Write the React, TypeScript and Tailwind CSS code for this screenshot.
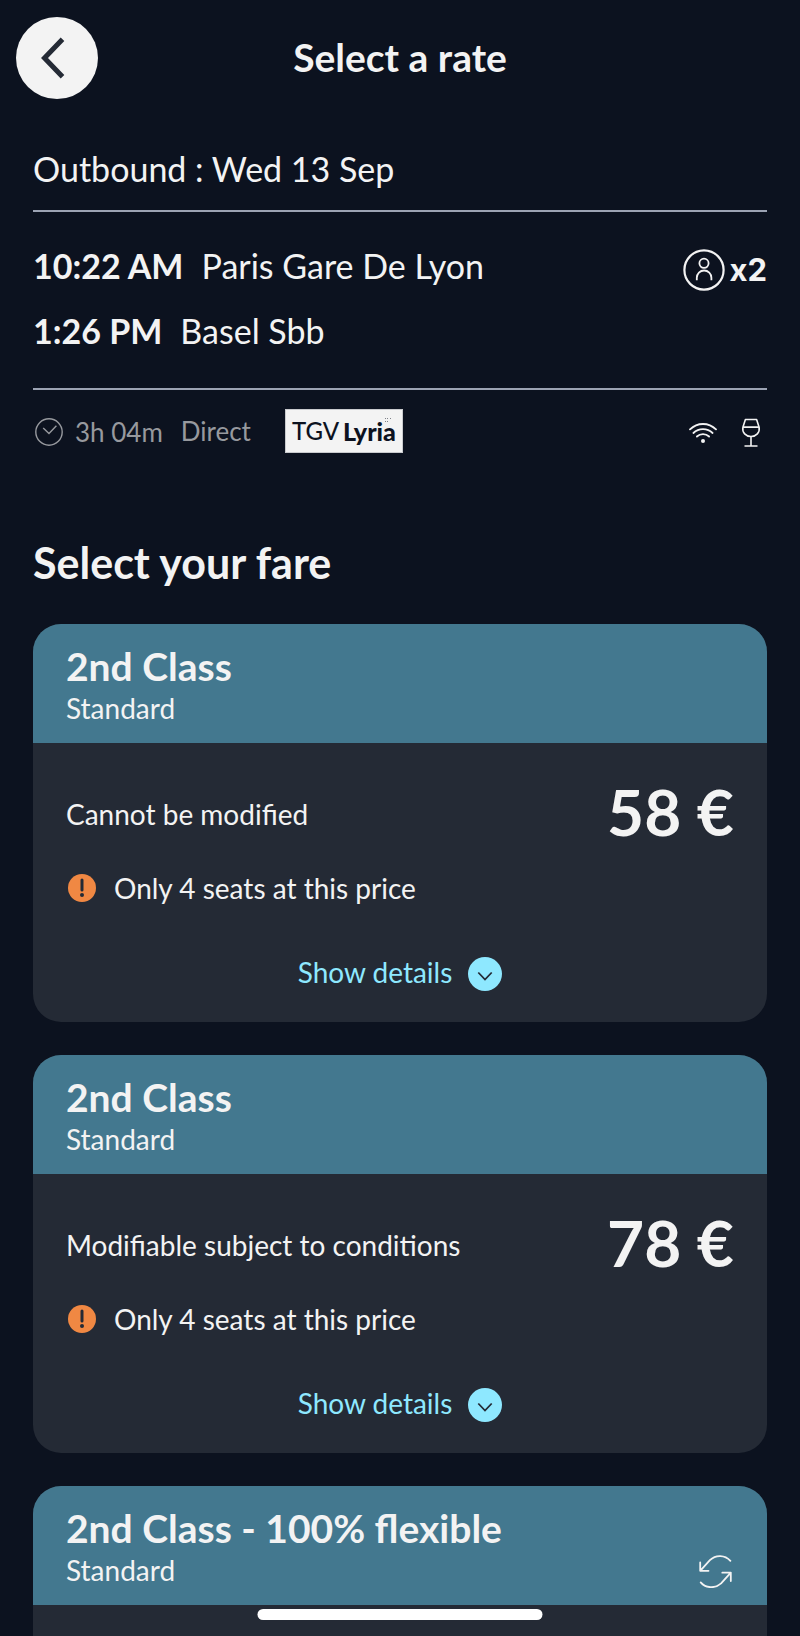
import { useState } from 'react';

type Fare = {
  id: number;
  title: string;
  category: string;
  exchangeable?: boolean;
  offer?: { condition: string; price: number; seatsLeft: number };
};

const fares: Fare[] = [
  { id: 1, title: '2nd Class', category: 'Standard', offer: { condition: 'Cannot be modified', price: 58, seatsLeft: 4 } },
  { id: 2, title: '2nd Class', category: 'Standard', offer: { condition: 'Modifiable subject to conditions', price: 78, seatsLeft: 4 } },
  { id: 3, title: '2nd Class - 100% flexible', category: 'Standard', exchangeable: true },
];

function PassengerIcon() {
  return (
    <svg width="42" height="42" viewBox="0 0 42 42" fill="none" stroke="currentColor" aria-hidden="true">
      <circle cx="21" cy="21" r="19.6" strokeWidth="2.2" />
      <circle cx="21" cy="14.3" r="4.6" strokeWidth="1.8" />
      <path d="M13.8 31.2v-2.4a7.3 7.3 0 0 1 14.6 0v2.4" strokeWidth="1.8" />
    </svg>
  );
}

function ClockIcon() {
  return (
    <svg width="28" height="28" viewBox="0 0 28 28" fill="none" stroke="currentColor" strokeWidth="1.4" aria-hidden="true">
      <circle cx="14" cy="14" r="13.2" />
      <path d="M8.2 10l5.8 5.6 7.4-7.8" />
    </svg>
  );
}

function WifiIcon() {
  return (
    <svg width="28" height="22" viewBox="0 0 28 22" fill="none" stroke="currentColor" strokeWidth="1.8" strokeLinecap="round" aria-hidden="true">
      <path d="M1 7.4c7.4-7.2 18.6-7.2 26 0" />
      <path d="M4.4 11c5.4-5.2 13.8-5.2 19.2 0" />
      <path d="M7.9 14.5c3.4-3.3 8.8-3.3 12.2 0" />
      <circle cx="14" cy="19" r="2" fill="currentColor" stroke="none" />
    </svg>
  );
}

function GlassIcon() {
  return (
    <svg width="20" height="30" viewBox="0 0 20 30" fill="none" stroke="currentColor" strokeWidth="1.6" strokeLinejoin="round" aria-hidden="true">
      <path d="M4.4 1.5h11.2l2.5 7.7c1 5.4-3 9.3-8.1 9.3s-9.1-3.9-8.1-9.3z" />
      <path d="M2 9.1h16M10 18.500v9.500M3.500 28h13" />
    </svg>
  );
}

function WarningIcon() {
  return (
    <svg width="28" height="28" viewBox="0 0 28 28" aria-hidden="true">
      <circle cx="14" cy="14" r="14" fill="#f08843" />
      <path d="M14 6v10" stroke="#242a35" strokeWidth="3" strokeLinecap="round" />
      <circle cx="14" cy="21" r="2" fill="#242a35" />
    </svg>
  );
}

function ExchangeIcon() {
  return (
    <svg className="mr-0.5 mb-0.5" width="33" height="33" viewBox="0 0 33 33" fill="none" stroke="currentColor" strokeWidth="1.8" strokeLinecap="round" strokeLinejoin="round" aria-hidden="true">
      <path d="M1.2 7.5v8.3h8.3M1.2 15.8l9.7-10.6c6-5.8 15-5.3 20.5.6" />
      <path d="M31.8 26v-8.3h-8.5M31.800 17.700l-9.700 10.700c-6 5.400-15.500 5-20.400-1" />
    </svg>
  );
}

function LyriaLogo() {
  return (
    <div className="relative flex h-11 items-center gap-1 border border-[#c9cacd] bg-[#f3f3f3] px-1.5 text-[#0c121f]">
      <span className="text-[24px] leading-8 font-medium">TGV</span>
      <span className="text-[25px] leading-8 font-black">Lyria</span>
      <svg className="absolute top-2 right-2.5" width="8" height="6" viewBox="0 0 8 6" fill="#0c121f" opacity="0.5" aria-hidden="true">
        <path d="M1 0h1v1H1zM3 0h1v1H3zM6 0h1v1H6zM1 3h1v1H1zM3 3h1v1H3z" />
      </svg>
    </div>
  );
}

function FareCard({ fare }: { fare: Fare }) {
  const [open, setOpen] = useState(false);
  const { offer } = fare;

  return (
    <article className="overflow-hidden rounded-[28px] bg-[#242a35]">
      {/* Class banner */}
      <header className="flex items-end justify-between bg-[#43788f] px-[33px] pt-5 pb-[15px]">
        <div>
          <h3 className="text-[39px] leading-11 font-bold">{fare.title}</h3>
          <p className="text-[28px] leading-10">{fare.category}</p>
        </div>
        {fare.exchangeable && <ExchangeIcon />}
      </header>

      {offer ? (
        <div className="px-[33px] pt-[33px] pb-[30px]">
          <div className="flex items-center justify-between">
            <p className="text-[28px] leading-10">{offer.condition}</p>
            <p className="pb-1 text-[64px] leading-18 font-bold">{offer.price} €</p>
          </div>

          <div className="mt-4 flex items-center gap-[18px] pl-0.5">
            <WarningIcon />
            <p className="text-[28px] leading-10">Only {offer.seatsLeft} seats at this price</p>
          </div>

          {open && <p className="mt-6 text-[28px] leading-10">{offer.condition}</p>}

          <button
            type="button"
            aria-expanded={open}
            onClick={() => setOpen(!open)}
            className="mx-auto mt-11 flex items-center gap-4 text-[28px] leading-10 text-[#8ee8ff]"
          >
            <span>Show details</span>
            <svg className="mt-1" width="34" height="34" viewBox="0 0 34 34" aria-hidden="true">
              <circle cx="17" cy="17" r="17" fill="#8ee8ff" />
              <path d="M10.3 15.500l6.700 7 6.700-7" fill="none" stroke="#242a35" strokeWidth="1.800" />
            </svg>
          </button>
        </div>
      ) : (
        <div className="h-64" />
      )}
    </article>
  );
}

export default function App() {
  return (
    <div className="h-screen overflow-hidden bg-[#0c121f] font-['Lato','Open_Sans',sans-serif] text-[#f3f3f3]">
      {/* Top bar */}
      <header className="grid grid-cols-[82px_1fr_82px] items-center px-4 pt-[17px]">
        <button type="button" aria-label="Back" className="flex size-[82px] items-center justify-center rounded-full bg-[#f3f3f3]">
          <svg width="32" height="42" viewBox="0 0 32 42" fill="none" stroke="#242a35" strokeWidth="5" aria-hidden="true">
            <path d="M21.5 2.2L3.5 21l18 18.8" />
          </svg>
        </button>
        <h1 className="pb-0.5 text-center text-[39px] leading-12 font-bold">Select a rate</h1>
      </header>

      <main className="px-[33px] pt-12">
        {/* Trip summary */}
        <h2 className="border-b-2 border-[#9ca3b3] pb-[19px] text-[34px] leading-11">Outbound : Wed 13 Sep</h2>

        <section className="flex items-start justify-between border-b-2 border-[#9ca3b3] pt-8 pb-[35px] text-[34px] leading-11">
          <div className="flex flex-col gap-[21px]">
            <p className="flex gap-[18px]">
              <time className="font-bold">10:22 AM</time>
              <span>Paris Gare De Lyon</span>
            </p>
            <p className="flex gap-[18px]">
              <time className="font-bold">1:26 PM</time>
              <span>Basel Sbb</span>
            </p>
          </div>
          <div className="flex items-center gap-1 pt-[5px]">
            <PassengerIcon />
            <span className="font-['Inter',sans-serif] text-[31px] leading-10 font-bold">x2</span>
          </div>
        </section>

        <section className="flex items-center justify-between pt-[19px]">
          <div className="flex items-center text-[26px] leading-10 text-[#97999e]">
            <div className="flex items-center gap-3 pt-px pl-0.5">
              <ClockIcon />
              <span>3h 04m</span>
            </div>
            <span className="mr-[34px] ml-[18px]">Direct</span>
            <LyriaLogo />
          </div>
          <div className="flex items-center gap-6 pt-1 pr-1.5">
            <WifiIcon />
            <GlassIcon />
          </div>
        </section>

        {/* Fares */}
        <h2 className="pt-[84px] text-[43px] leading-13 font-bold">Select your fare</h2>
        <div className="mt-[35px] flex flex-col gap-[33px]">
          {fares.map((fare) => (
            <FareCard key={fare.id} fare={fare} />
          ))}
        </div>
      </main>

      {/* Home indicator */}
      <div className="fixed bottom-4 left-1/2 h-[11px] w-[285px] -translate-x-1/2 rounded-full bg-white" />
    </div>
  );
}
